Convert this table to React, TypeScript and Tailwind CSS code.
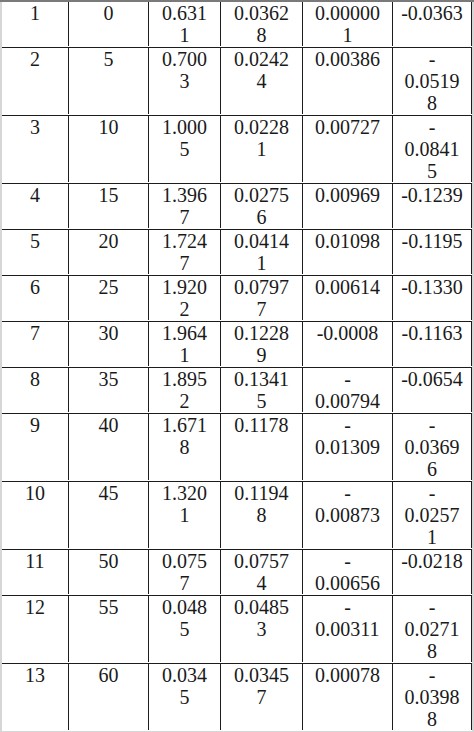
const widths = ["w-[66px]", "w-[80px] border-l", "w-[72px] border-l", "w-[82px] border-l", "w-[90px] border-l", "w-[80px] border-x"];

const rows: string[][][] = [
  [["1"], ["0"], ["0.631", "1"], ["0.0362", "8"], ["0.00000", "1"], ["-0.0363"]],
  [["2"], ["5"], ["0.700", "3"], ["0.0242", "4"], ["0.00386"], ["-", "0.0519", "8"]],
  [["3"], ["10"], ["1.000", "5"], ["0.0228", "1"], ["0.00727"], ["-", "0.0841", "5"]],
  [["4"], ["15"], ["1.396", "7"], ["0.0275", "6"], ["0.00969"], ["-0.1239"]],
  [["5"], ["20"], ["1.724", "7"], ["0.0414", "1"], ["0.01098"], ["-0.1195"]],
  [["6"], ["25"], ["1.920", "2"], ["0.0797", "7"], ["0.00614"], ["-0.1330"]],
  [["7"], ["30"], ["1.964", "1"], ["0.1228", "9"], ["-0.0008"], ["-0.1163"]],
  [["8"], ["35"], ["1.895", "2"], ["0.1341", "5"], ["-", "0.00794"], ["-0.0654"]],
  [["9"], ["40"], ["1.671", "8"], ["0.1178"], ["-", "0.01309"], ["-", "0.0369", "6"]],
  [["10"], ["45"], ["1.320", "1"], ["0.1194", "8"], ["-", "0.00873"], ["-", "0.0257", "1"]],
  [["11"], ["50"], ["0.075", "7"], ["0.0757", "4"], ["-", "0.00656"], ["-0.0218"]],
  [["12"], ["55"], ["0.048", "5"], ["0.0485", "3"], ["-", "0.00311"], ["-", "0.0271", "8"]],
  [["13"], ["60"], ["0.034", "5"], ["0.0345", "7"], ["0.00078"], ["-", "0.0398", "8"]],
];

export default function App() {
  return (
    <div className="w-[474px] h-[732px] bg-[#d6d6d6] border-t-2 border-[#7a7a7a] pl-[2px] overflow-hidden font-['Liberation_Serif',serif] text-[20px] leading-[22px] text-[#1a1a1a]">
      <div className="w-[470px] bg-white">
        {rows.map((row, i) => (
          <div key={i} className={i === 0 ? "flex pb-px" : "flex border-t border-[#1c1c1c] pb-px"}>
            {row.map((cell, j) => (
              <div key={j} className={`${widths[j]} border-[#1c1c1c] flex flex-col items-center shrink-0`}>
                {cell.map((line, k) => (
                  <span key={k}>{line}</span>
                ))}
              </div>
            ))}
          </div>
        ))}
      </div>
    </div>
  );
}
